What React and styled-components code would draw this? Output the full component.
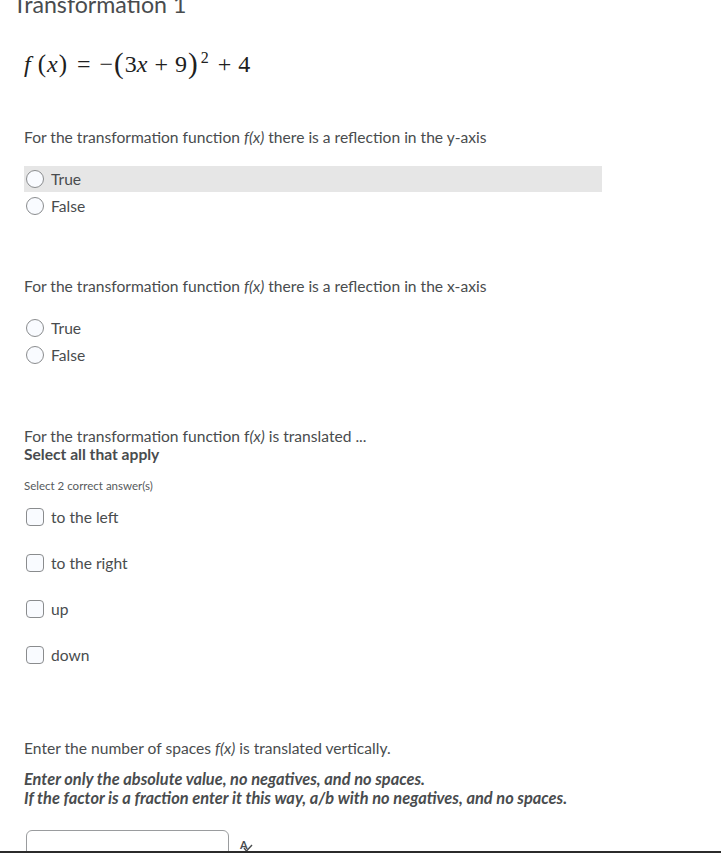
import React from 'react'
import styled, { createGlobalStyle } from 'styled-components'

const Global = createGlobalStyle`
    html, body {
        margin: 0;
        padding: 0;
        background: #ffffff;
    }
    body {
        font-family: 'Lato', 'Noto Sans', sans-serif;
        color: #494c4e;
        overflow: hidden;
    }
`

const Page = styled.main`
    padding: 0 0 40px 24px;
`
const Title = styled.h1`
    margin: -10px 0 0 -11px;
    font-family: 'Lato', sans-serif;
    font-weight: 400;
    font-size: 23.2px;
    line-height: 29px;
    color: #494c4e;
`
const Formula = styled.div`
    margin-top: 25px;
    height: 40px;
    display: flex;
    align-items: center;
    font-family: 'Liberation Serif', 'DejaVu Serif', serif;
    font-size: 24px;
    color: #202020;
    white-space: nowrap;
    & * {
        font-family: 'Liberation Serif', 'DejaVu Serif', serif;
    }
`
const Var = styled.i`
    font-style: italic;
    padding-right: ${(p) => p.pad || 0}px;
`
const Op = styled.span`
    padding: 0 ${(p) => p.space || 7}px;
`
const Paren = styled.span`
    font-size: ${(p) => (p.big ? 29 : 25)}px;
    position: relative;
    top: ${(p) => (p.big ? -1 : 0)}px;
    padding: 0 1px;
`
const Sup = styled.sup`
    font-size: 16px;
    position: relative;
    top: -6px;
    margin-left: 2px;
    margin-right: 2px;
`

const Question = styled.section`
    margin-top: ${(p) => p.top}px;
`
const Prompt = styled.p`
    margin: 0;
    font-size: 15.6px;
    line-height: 18px;
    color: #494c4e;
`
const Em = styled.i`
    font-style: italic;
`
const Strong = styled.strong`
    display: block;
    font-weight: 700;
`
const Hint = styled.p`
    margin: 15px 0 0;
    font-size: 11.5px;
    line-height: 16px;
    color: #565a5c;
`
const Options = styled.div`
    margin-top: ${(p) => p.top}px;
    width: 578px;
    display: flex;
    flex-direction: column;
    gap: ${(p) => p.gap || 1}px;
`
const Option = styled.label`
    display: flex;
    align-items: center;
    gap: 7px;
    height: 26px;
    padding-left: 2px;
    font-size: 15.6px;
    color: #494c4e;
    background: ${(p) => (p.hover ? '#e6e6e6' : 'transparent')};
`
const Radio = styled.span`
    width: 18px;
    height: 18px;
    box-sizing: border-box;
    border: 1px solid #8a8c8e;
    border-radius: 50%;
    background: #f9fbff;
`
const Check = styled.span`
    width: 18px;
    height: 18px;
    box-sizing: border-box;
    border: 1px solid #8a8c8e;
    border-radius: 4px;
    background: #f9fbff;
`
const Note = styled.p`
    margin: 13px 0 0;
    font-size: 16.4px;
    line-height: 18.5px;
    font-style: italic;
    font-weight: 700;
    color: #494c4e;
`
const AnswerRow = styled.div`
    margin-top: 23px;
    display: flex;
    align-items: flex-start;
    gap: 11px;
`
const Input = styled.div`
    width: 203px;
    height: 34px;
    margin-left: 2px;
    box-sizing: border-box;
    border: 1px solid #9a9c9e;
    border-radius: 6px;
    background: #fff;
`
const Spell = styled.span`
    position: relative;
    margin-top: 9px;
    font-size: 11px;
    font-weight: 700;
    color: #494c4e;
    line-height: 11px;
`
const SpellTick = styled.svg`
    position: absolute;
    left: 3px;
    top: 5px;
`
const BottomEdge = styled.div`
    position: fixed;
    left: 0;
    right: 0;
    bottom: 0;
    height: 2px;
    background: #2b2b2b;
`

function RadioGroup({ top, hoverFirst }) {
    return (
        <Options top={top}>
            <Option hover={hoverFirst}>
                <Radio />
                True
            </Option>
            <Option>
                <Radio />
                False
            </Option>
        </Options>
    )
}

const boxes = ['to the left', 'to the right', 'up', 'down']

export default function App() {
    return (
        <>
            <Global />
            <Page>
                <Title>Transformation 1</Title>
                <Formula>
                    <Var pad={6}>f</Var>
                    <Paren>(</Paren>
                    <Var>x</Var>
                    <Paren>)</Paren>
                    <Op space={9}>=</Op>
                    <span>−</span>
                    <Paren big>(</Paren>
                    3<Var>x</Var>
                    <Op>+</Op>9
                    <Paren big>)</Paren>
                    <Sup>2</Sup>
                    <Op>+</Op>4
                </Formula>

                <Question top={44}>
                    <Prompt>
                        For the transformation function <Em>f(x)</Em> there is a
                        reflection in the y-axis
                    </Prompt>
                    <RadioGroup top={20} hoverFirst />
                </Question>

                <Question top={58}>
                    <Prompt>
                        For the transformation function <Em>f(x)</Em> there is a
                        reflection in the x-axis
                    </Prompt>
                    <RadioGroup top={20} />
                </Question>

                <Question top={59}>
                    <Prompt>
                        For the transformation function f<Em>(x)</Em> is translated ...
                        <Strong>Select all that apply</Strong>
                    </Prompt>
                    <Hint>Select 2 correct answer(s)</Hint>
                    <Options top={10} gap={20}>
                        {boxes.map((b) => (
                            <Option key={b}>
                                <Check />
                                {b}
                            </Option>
                        ))}
                    </Options>
                </Question>

                <Question top={71}>
                    <Prompt>
                        Enter the number of spaces <Em>f(x)</Em> is translated vertically.
                    </Prompt>
                    <Note>
                        Enter only the absolute value, no negatives, and no spaces.
                        <br />
                        If the factor is a fraction enter it this way, a/b with no
                        negatives, and no spaces.
                    </Note>
                    <AnswerRow>
                        <Input />
                        <Spell>
                            A
                            <SpellTick width="10" height="8" viewBox="0 0 10 8">
                                <path d="M1 4 L3.5 7 L9 1" fill="none" stroke="#494c4e" strokeWidth="1.4" />
                            </SpellTick>
                        </Spell>
                    </AnswerRow>
                </Question>
            </Page>
            <BottomEdge />
        </>
    )
}
